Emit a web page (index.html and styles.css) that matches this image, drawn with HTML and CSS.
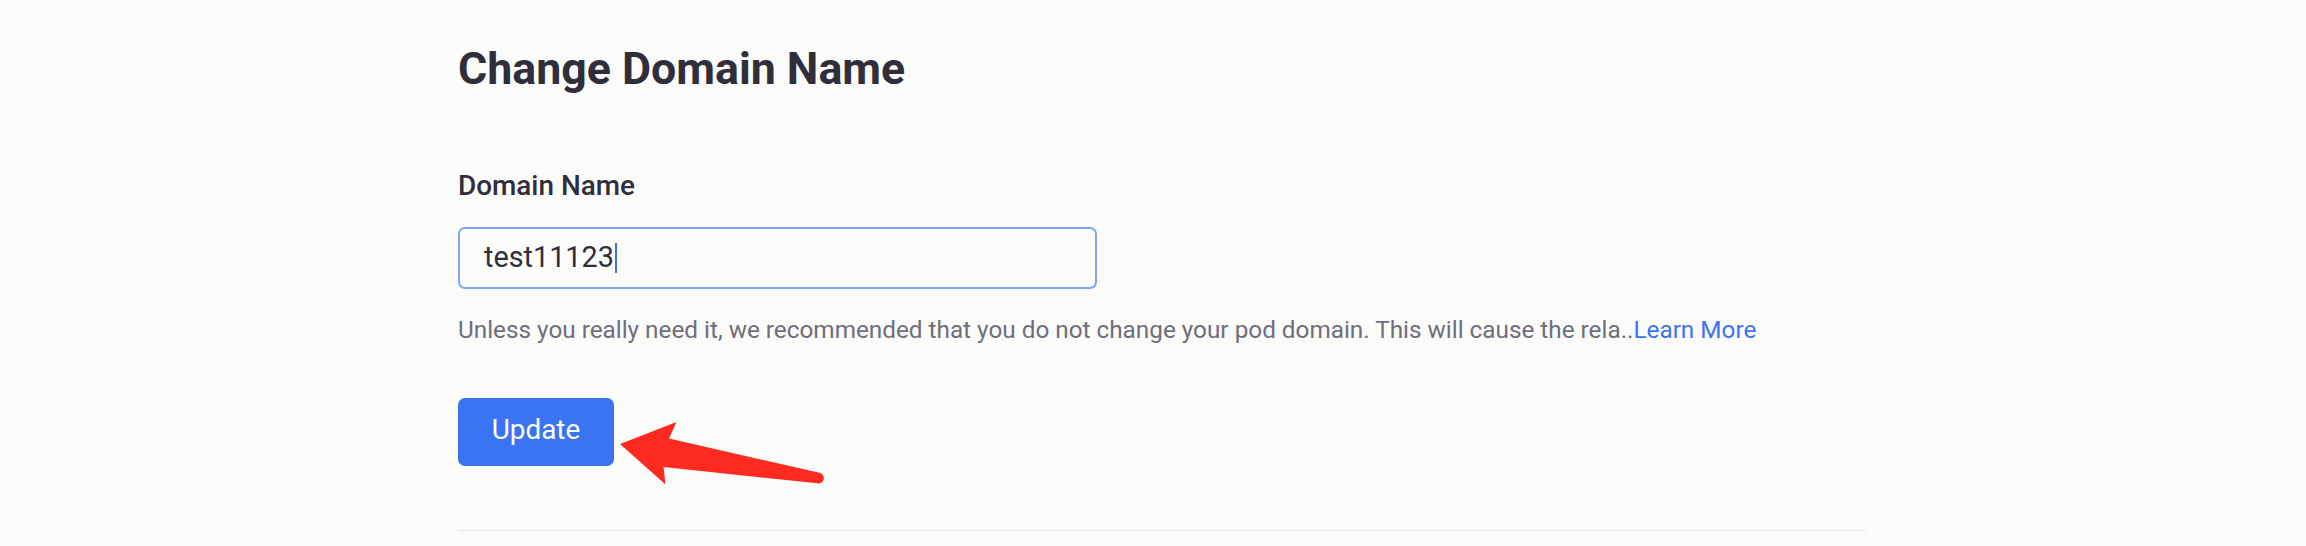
FILE: index.html
```html
<!DOCTYPE html>
<html lang="en">
<head>
<meta charset="utf-8">
<title>Change Domain Name</title>
<link rel="stylesheet" href="styles.css">
</head>
<body>
<main class="page">
  <section class="panel">
    <h1 class="title">Change Domain Name</h1>
    <form class="form" onsubmit="return false">
      <label class="label" for="domain">Domain Name</label>
      <div class="field" id="domain" role="textbox"><span class="value">test11123</span><span class="caret"></span></div>
      <p class="help">Unless you really need it, we recommended that you do not change your pod domain. This will cause the rela..<a class="link" href="#">Learn More</a></p>
      <div class="actions">
        <button class="btn" type="submit">Update</button>
        <svg class="arrow" width="220" height="80" viewBox="610 410 220 80" aria-hidden="true">
          <path d="M620 444 L676.5 422 L669 438.5 L819.5 472.8 A5.2 5.2 0 0 1 817.5 483.3 L663.5 467 L665.5 484.5 Z" fill="#fd2a1f"/>
        </svg>
      </div>
    </form>
    <hr class="divider">
  </section>
</main>
</body>
</html>
```
FILE: styles.css
```css
html, body {
  margin: 0;
  padding: 0;
  background: #fbfbfa;
}
body {
  font-family: Roboto, "Liberation Sans", Arial, sans-serif;
  color: #302e3a;
}
.page {
  padding-left: 458px;
}
.panel {
  width: 1408px;
}
.title {
  margin: 42px 0 0;
  font-size: 44.7px;
  line-height: 54px;
  font-weight: 700;
  color: #302e3a;
}
.form {
  display: flex;
  flex-direction: column;
  align-items: flex-start;
  margin-top: 73px;
}
.label {
  font-size: 27.9px;
  line-height: 34px;
  font-weight: 500;
  color: #302e3a;
}
.field {
  box-sizing: border-box;
  margin-top: 23.5px;
  width: 639px;
  height: 62.5px;
  border: 2px solid #7ea5f7;
  border-radius: 7px;
  padding: 0 0 2px 24px;
  display: flex;
  align-items: center;
  font-size: 28.8px;
  color: #302e3a;
  background: #fcfcfb;
}
.value {
  line-height: 34px;
}
.caret {
  display: inline-block;
  width: 2px;
  height: 30px;
  margin-left: 1px;
  margin-top: 3px;
  background: #3b6ef5;
}
.help {
  margin: 26px 0 0;
  font-size: 24.3px;
  line-height: 30px;
  color: #6f6e7a;
  white-space: nowrap;
}
.link {
  color: #3b73f3;
  text-decoration: none;
}
.actions {
  position: relative;
  margin-top: 53.3px;
}
.btn {
  display: block;
  box-sizing: border-box;
  width: 156px;
  height: 67.4px;
  padding: 0 0 3px;
  border: 0;
  border-radius: 7px;
  background: #3b74f3;
  color: #ffffff;
  font-family: Roboto, "Liberation Sans", Arial, sans-serif;
  font-size: 27.9px;
  font-weight: 400;
  line-height: 32px;
  cursor: pointer;
}
.arrow {
  position: absolute;
  left: 152px;
  top: 11.7px;
}
.divider {
  margin: 64.3px 0 0;
  height: 1.5px;
  border: 0;
  background: #e6e6e6;
}
```
